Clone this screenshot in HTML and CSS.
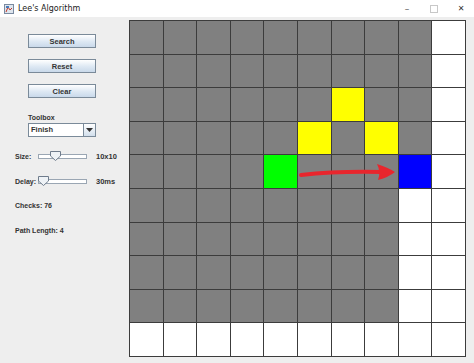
FILE: index.html
```html
<!DOCTYPE html>
<html>
<head>
  <title>Lee's Algorithm</title>
  <link rel="stylesheet" href="styles.css">
</head>
<body>
  <div class="window">
    <div class="titlebar">
      <span class="app-icon">
        <svg width="10" height="10" viewBox="0 0 10 10">
          <rect x="0.5" y="0.5" width="9" height="9" fill="#dfe6ee" stroke="#7a8aa0"/>
          <path d="M2 8 L4 3 L6 6 L8 4" fill="none" stroke="#c0392b" stroke-width="1"/>
          <rect x="2" y="2" width="3" height="2" fill="#4a7ab8"/>
        </svg>
      </span>
      <span class="title">Lee's Algorithm</span>
      <span class="win-btns">
        <span class="win-btn">&#8211;</span>
        <span class="win-btn max"></span>
        <span class="win-btn close">&#10005;</span>
      </span>
    </div>

    <div class="content">
      <div class="panel">
        <button class="jbutton">Search</button>
        <button class="jbutton">Reset</button>
        <button class="jbutton">Clear</button>

        <div class="toolbox">
          <div class="label">Toolbox</div>
          <div class="combo">
            <span class="combo-text">Finish</span>
            <span class="combo-arrow">
              <svg width="7" height="4" viewBox="0 0 7 4"><path d="M0 0 L7 0 L3.5 4 Z" fill="#333"/></svg>
            </span>
          </div>
        </div>

        <div class="slider-row">
          <span class="slider-label">Size:</span>
          <span class="slider" id="size-slider">
            <span class="track"></span>
            <svg class="thumb" style="left: 12px" width="11" height="10" viewBox="0 0 11 10">
              <path d="M0.5 0.5 H10.5 V5 L5.5 9.5 L0.5 5 Z" fill="#eef2f6" stroke="#6f7c8c"/>
            </svg>
          </span>
          <span class="slider-value">10x10</span>
        </div>

        <div class="slider-row">
          <span class="slider-label">Delay:</span>
          <span class="slider">
            <span class="track"></span>
            <svg class="thumb" style="left: 0px" width="11" height="10" viewBox="0 0 11 10">
              <path d="M0.5 0.5 H10.5 V5 L5.5 9.5 L0.5 5 Z" fill="#eef2f6" stroke="#6f7c8c"/>
            </svg>
          </span>
          <span class="slider-value">30ms</span>
        </div>

        <div class="stat">Checks: 76</div>
        <div class="stat">Path Length: 4</div>
      </div>

      <div class="board">
        <div class="grid" id="grid"></div>
        <svg class="arrow" width="110" height="30" viewBox="0 0 110 30">
          <path d="M4 20 Q40 16 84 17" fill="none" stroke="#e8262d" stroke-width="4" stroke-linecap="round"/>
          <path d="M80 9 Q92 13 98 17 Q92 22 81 25 Q84 17 80 9 Z" fill="#e8262d"/>
        </svg>
      </div>
    </div>
  </div>

  <script>
    // cell layout of the 10x10 board
    var rows = [
      'ggggggggg.',
      'ggggggggg.',
      'ggggggygg.',
      'gggggygyg.',
      'ggggSgggE.',
      'gggggggg..',
      'gggggggg..',
      'gggggggg..',
      'gggggggg..',
      '..........'
    ];
    var classes = { 'g': 'wall', '.': 'open', 'y': 'visited', 'S': 'start', 'E': 'end' };
    var grid = document.getElementById('grid');
    for (var r = 0; r < rows.length; r++) {
      for (var c = 0; c < rows[r].length; c++) {
        var cell = document.createElement('div');
        cell.className = 'cell ' + classes[rows[r][c]];
        grid.appendChild(cell);
      }
    }
  </script>
</body>
</html>
```

FILE: styles.css
```css
/* window frame */
html, body {
  margin: 0;
  padding: 0;
}

body {
  width: 474px;
  height: 363px;
  overflow: hidden;
  font-family: "Liberation Sans", Arial, sans-serif;
  background: #eeeeee;
}

.window {
  display: flex;
  flex-direction: column;
  height: 363px;
}

.titlebar {
  height: 17px;
  background: #ffffff;
  display: flex;
  align-items: center;
  padding-left: 4px;
  font-family: "DejaVu Sans", sans-serif;
  font-size: 8px;
  color: #222;
}

.app-icon {
  display: flex;
  width: 10px;
  height: 10px;
  margin-right: 4px;
}

.title {
  flex: 1;
}

.win-btns {
  display: flex;
  align-items: center;
}

.win-btn {
  width: 22px;
  text-align: center;
  color: #555;
  font-size: 9px;
  margin-left: 2px;
}

.win-btn.max {
  width: 6px;
  height: 6px;
  border: 1px solid #c8c8c8;
  margin: 0 8px 0 12px;
}

.win-btn.close {
  width: 26px;
  color: #333;
  font-size: 8px;
}

.content {
  flex: 1;
  display: flex;
  background: #eeeeee;
}

/* left control panel */
.panel {
  width: 129px;
  display: flex;
  flex-direction: column;
  padding-top: 17px;
  font-size: 7.5px;
  font-weight: bold;
  color: #333;
}

.jbutton {
  width: 68px;
  height: 14px;
  margin: 0 0 11px 28px;
  padding: 0;
  border: 1px solid #7a8a99;
  background: linear-gradient(#ffffff, #dde8f3 55%, #c9d9ea);
  font-family: "Liberation Sans", Arial, sans-serif;
  font-size: 7.5px;
  font-weight: bold;
  color: #333;
}

.toolbox {
  margin: 5px 0 0 28px;
}

.label {
  font-size: 7px;
  margin-bottom: 2px;
}

.combo {
  width: 68px;
  height: 14px;
  border: 1px solid #7a8a99;
  background: #ffffff;
  display: flex;
  box-sizing: border-box;
}

.combo-text {
  flex: 1;
  padding-left: 2px;
  line-height: 12px;
}

.combo-arrow {
  width: 11px;
  border-left: 1px solid #7a8a99;
  background: linear-gradient(#ffffff, #d2dfec);
  display: flex;
  align-items: center;
  justify-content: center;
}

.slider-row {
  display: flex;
  align-items: center;
  margin: 13px 0 0 15px;
  height: 12px;
}

.slider-row + .slider-row {
  margin-top: 13px;
}

.slider-label {
  width: 23px;
  font-size: 7px;
}

.slider {
  position: relative;
  width: 49px;
  height: 10px;
  margin-right: 9px;
}

.slider .track {
  position: absolute;
  left: 0;
  right: 0;
  top: 3px;
  height: 3px;
  border: 1px solid #9aa6b3;
  background: #ffffff;
}

.slider .thumb {
  position: absolute;
  top: 0;
}

.slider-value {
  font-size: 7.5px;
}

.stat {
  margin: 15px 0 0 15px;
  font-size: 7px;
}

.stat + .stat {
  margin-top: 18px;
}

/* board */
.board {
  position: relative;
  margin-top: 3px;
}

.grid {
  width: 337px;
  height: 337px;
  box-sizing: border-box;
  display: grid;
  grid-template-columns: repeat(10, 1fr);
  grid-template-rows: repeat(10, 1fr);
  gap: 1px;
  border: 1px solid #3c3c3c;
  background: #3c3c3c;
}

.cell.wall {
  background: #808080;
}

.cell.open {
  background: #ffffff;
}

.cell.visited {
  background: #ffff00;
}

.cell.start {
  background: #00ff00;
}

.cell.end {
  background: #0000ff;
}

.arrow {
  position: absolute;
  left: 168px;
  top: 135px;
}
```
